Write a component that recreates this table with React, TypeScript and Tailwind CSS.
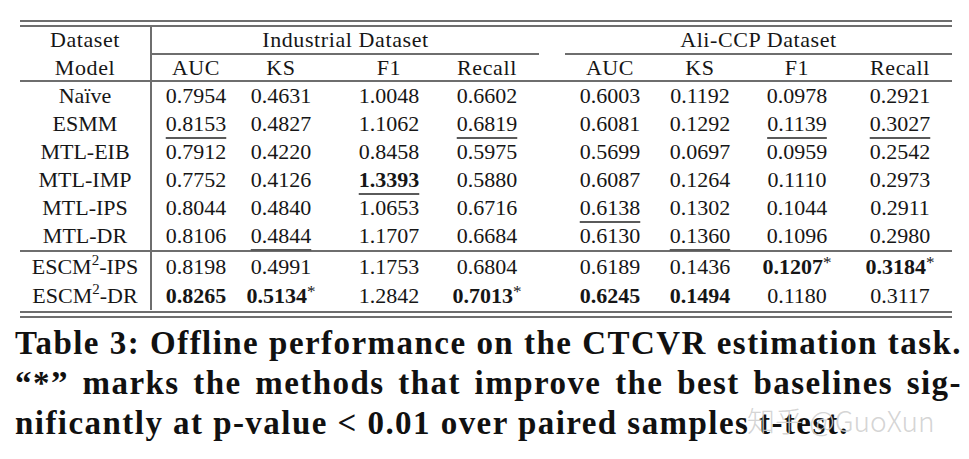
import React from "react";

type Cell = { v: string; b?: boolean; u?: boolean; s?: boolean };

const COLS =
  "grid grid-cols-[132px_88px_82px_134px_62px_48px_88px_92px_102px_104px]";

const esc = (suffix: string) => (
  <span>
    ESCM<sup className="text-[15px] relative -top-[9px] leading-none">2</sup>
    {suffix}
  </span>
);

const rows: { name: React.ReactNode; cells: Cell[]; h: string }[] = [
  {
    name: "Naïve",
    h: "h-[28px]",
    cells: [
      { v: "0.7954" },
      { v: "0.4631" },
      { v: "1.0048" },
      { v: "0.6602" },
      { v: "0.6003" },
      { v: "0.1192" },
      { v: "0.0978" },
      { v: "0.2921" },
    ],
  },
  {
    name: "ESMM",
    h: "h-[28px]",
    cells: [
      { v: "0.8153", u: true },
      { v: "0.4827" },
      { v: "1.1062" },
      { v: "0.6819", u: true },
      { v: "0.6081" },
      { v: "0.1292" },
      { v: "0.1139", u: true },
      { v: "0.3027", u: true },
    ],
  },
  {
    name: "MTL-EIB",
    h: "h-[28px]",
    cells: [
      { v: "0.7912" },
      { v: "0.4220" },
      { v: "0.8458" },
      { v: "0.5975" },
      { v: "0.5699" },
      { v: "0.0697" },
      { v: "0.0959" },
      { v: "0.2542" },
    ],
  },
  {
    name: "MTL-IMP",
    h: "h-[28px]",
    cells: [
      { v: "0.7752" },
      { v: "0.4126" },
      { v: "1.3393", b: true, u: true },
      { v: "0.5880" },
      { v: "0.6087" },
      { v: "0.1264" },
      { v: "0.1110" },
      { v: "0.2973" },
    ],
  },
  {
    name: "MTL-IPS",
    h: "h-[28px]",
    cells: [
      { v: "0.8044" },
      { v: "0.4840" },
      { v: "1.0653" },
      { v: "0.6716" },
      { v: "0.6138", u: true },
      { v: "0.1302" },
      { v: "0.1044" },
      { v: "0.2911" },
    ],
  },
  {
    name: "MTL-DR",
    h: "h-[28px]",
    cells: [
      { v: "0.8106" },
      { v: "0.4844", u: true },
      { v: "1.1707" },
      { v: "0.6684" },
      { v: "0.6130" },
      { v: "0.1360", u: true },
      { v: "0.1096" },
      { v: "0.2980" },
    ],
  },
];

const rows2: { name: React.ReactNode; cells: Cell[]; h: string }[] = [
  {
    name: esc("-IPS"),
    h: "h-[29px]",
    cells: [
      { v: "0.8198" },
      { v: "0.4991" },
      { v: "1.1753" },
      { v: "0.6804" },
      { v: "0.6189" },
      { v: "0.1436" },
      { v: "0.1207", b: true, s: true },
      { v: "0.3184", b: true, s: true },
    ],
  },
  {
    name: esc("-DR"),
    h: "h-[29px]",
    cells: [
      { v: "0.8265", b: true },
      { v: "0.5134", b: true, s: true },
      { v: "1.2842" },
      { v: "0.7013", b: true, s: true },
      { v: "0.6245", b: true },
      { v: "0.1494", b: true },
      { v: "0.1180" },
      { v: "0.3117" },
    ],
  },
];

function Num({ c }: { c: Cell }) {
  return (
    <div className="flex items-center justify-center whitespace-nowrap">
      <span
        className={`${c.b ? "font-bold" : ""} ${
          c.u
            ? "underline decoration-[#5a5a5a] decoration-2 underline-offset-[6px]"
            : ""
        }`}
      >
        {c.v}
        {c.s && (
          <sup className="font-normal text-[17px] relative -top-[6px] leading-none">
            *
          </sup>
        )}
      </span>
    </div>
  );
}

function DataRow({
  name,
  cells,
  h,
}: {
  name: React.ReactNode;
  cells: Cell[];
  h: string;
}) {
  return (
    <div className={`${COLS} ${h}`}>
      <div className="flex items-center justify-center border-r-2 border-[#6e6e6e] whitespace-nowrap">
        {name}
      </div>
      {cells.slice(0, 4).map((c, i) => (
        <Num key={i} c={c} />
      ))}
      <div />
      {cells.slice(4).map((c, i) => (
        <Num key={i + 4} c={c} />
      ))}
    </div>
  );
}

export default function App() {
  const heads = ["AUC", "KS", "F1", "Recall"];
  return (
    <div className="relative w-[969px] h-[459px] overflow-hidden bg-white text-[#161616] font-['Liberation_Serif',serif]">
      <div className="pt-[20px] ml-[20px] w-[932px] text-[22px] leading-none">
        <div className="h-[2px] bg-[#6e6e6e]" />
        <div className="h-[2px] mt-[3px] bg-[#6e6e6e]" />
        {/* header row 1 */}
        <div className="grid grid-cols-[132px_387px_26px_387px] h-[26px] tracking-[0.6px]">
          <div className="flex items-center justify-center border-r-2 border-[#6e6e6e]">
            Dataset
          </div>
          <div className="flex items-center justify-center">
            Industrial Dataset
          </div>
          <div />
          <div className="flex items-center justify-center">
            Ali-CCP Dataset
          </div>
        </div>
        <div className="grid grid-cols-[132px_387px_26px_387px] h-[2px]">
          <div className="border-r-2 border-[#6e6e6e]" />
          <div className="bg-[#6e6e6e]" />
          <div />
          <div className="bg-[#6e6e6e]" />
        </div>
        {/* header row 2 */}
        <div className={`${COLS} h-[25px] tracking-[0.6px]`}>
          <div className="flex items-center justify-center border-r-2 border-[#6e6e6e]">
            Model
          </div>
          {heads.map((t) => (
            <div key={"a" + t} className="flex items-center justify-center">
              {t}
            </div>
          ))}
          <div />
          {heads.map((t) => (
            <div key={"b" + t} className="flex items-center justify-center">
              {t}
            </div>
          ))}
        </div>
        <div className="h-[2px] bg-[#6e6e6e]" />
        {rows.map((r, i) => (
          <DataRow key={i} {...r} />
        ))}
        <div className="h-[2px] bg-[#6e6e6e]" />
        {rows2.map((r, i) => (
          <DataRow key={i} {...r} />
        ))}
        <div className="h-[2px] mt-[1px] bg-[#6e6e6e]" />
        <div className="h-[2px] mt-[3px] bg-[#6e6e6e]" />
      </div>
      {/* caption */}
      <div className="ml-[15px] mt-[5px] w-[947px] font-bold text-[33px] leading-[40px] tracking-[1.45px] text-[#111]">
        <div className="text-justify [text-align-last:justify] whitespace-nowrap">
          Table 3: Offline performance on the CTCVR estimation task.
        </div>
        <div className="text-justify [text-align-last:justify] whitespace-nowrap">
          “*” marks the methods that improve the best baselines sig-
        </div>
        <div className="whitespace-nowrap">
          nificantly at p-value &lt; 0.01 over paired samples t-test.
        </div>
      </div>
      {/* watermark */}
      <div className="absolute left-[747px] top-[402px] text-[28px] leading-[36px] text-[#cfcfcf]/90 font-['Noto_Sans_CJK_SC','Noto_Sans',sans-serif] font-light whitespace-nowrap">
        知乎 @GuoXun
      </div>
    </div>
  );
}
